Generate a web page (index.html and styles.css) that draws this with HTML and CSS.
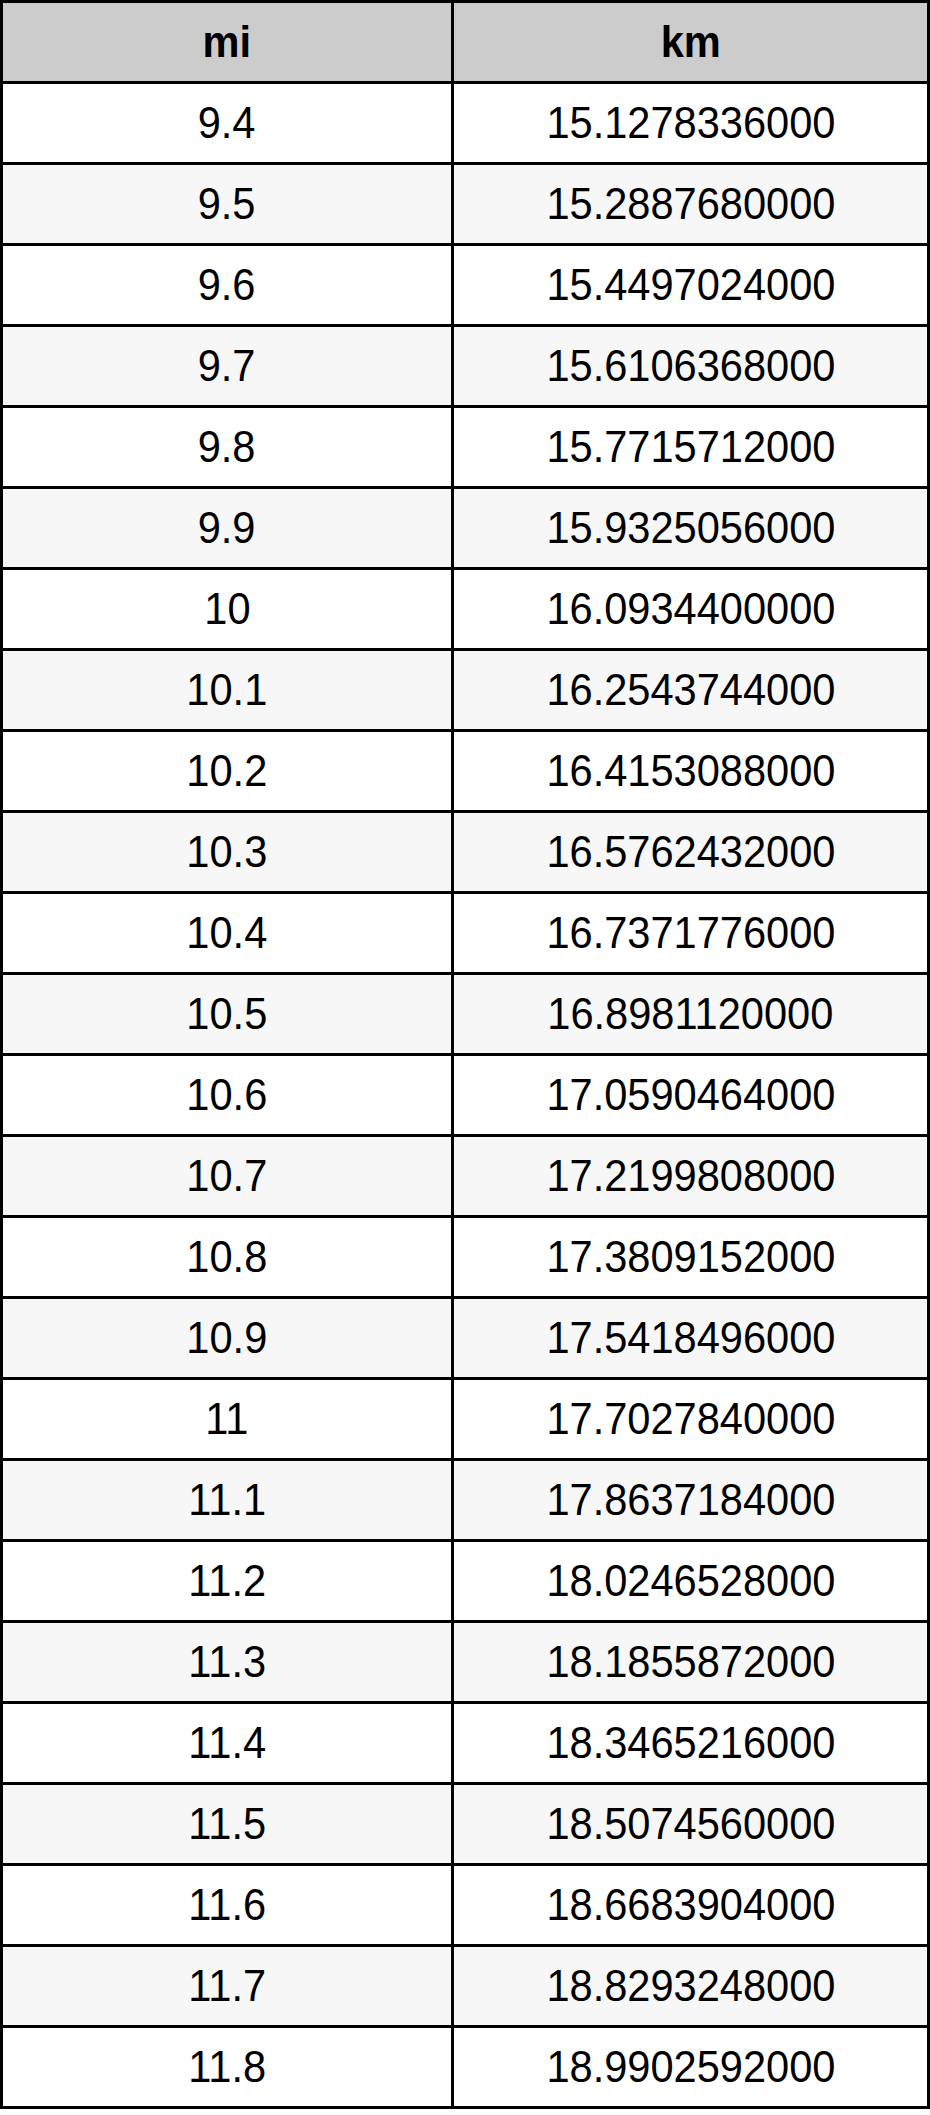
FILE: index.html
```html
<!DOCTYPE html>
<html>
<head>
<meta charset="utf-8">
<title>mi to km</title>
<link rel="stylesheet" href="styles.css">
</head>
<body>
<table class="conv">
<thead>
<tr><th class="c1"><span>mi</span></th><th class="c2"><span>km</span></th></tr>
</thead>
<tbody>
<tr><td><span>9.4</span></td><td><span>15.1278336000</span></td></tr>
<tr><td><span>9.5</span></td><td><span>15.2887680000</span></td></tr>
<tr><td><span>9.6</span></td><td><span>15.4497024000</span></td></tr>
<tr><td><span>9.7</span></td><td><span>15.6106368000</span></td></tr>
<tr><td><span>9.8</span></td><td><span>15.7715712000</span></td></tr>
<tr><td><span>9.9</span></td><td><span>15.9325056000</span></td></tr>
<tr><td><span>10</span></td><td><span>16.0934400000</span></td></tr>
<tr><td><span>10.1</span></td><td><span>16.2543744000</span></td></tr>
<tr><td><span>10.2</span></td><td><span>16.4153088000</span></td></tr>
<tr><td><span>10.3</span></td><td><span>16.5762432000</span></td></tr>
<tr><td><span>10.4</span></td><td><span>16.7371776000</span></td></tr>
<tr><td><span>10.5</span></td><td><span>16.8981120000</span></td></tr>
<tr><td><span>10.6</span></td><td><span>17.0590464000</span></td></tr>
<tr><td><span>10.7</span></td><td><span>17.2199808000</span></td></tr>
<tr><td><span>10.8</span></td><td><span>17.3809152000</span></td></tr>
<tr><td><span>10.9</span></td><td><span>17.5418496000</span></td></tr>
<tr><td><span>11</span></td><td><span>17.7027840000</span></td></tr>
<tr><td><span>11.1</span></td><td><span>17.8637184000</span></td></tr>
<tr><td><span>11.2</span></td><td><span>18.0246528000</span></td></tr>
<tr><td><span>11.3</span></td><td><span>18.1855872000</span></td></tr>
<tr><td><span>11.4</span></td><td><span>18.3465216000</span></td></tr>
<tr><td><span>11.5</span></td><td><span>18.5074560000</span></td></tr>
<tr><td><span>11.6</span></td><td><span>18.6683904000</span></td></tr>
<tr><td><span>11.7</span></td><td><span>18.8293248000</span></td></tr>
<tr><td><span>11.8</span></td><td><span>18.9902592000</span></td></tr>
</tbody>
</table>
</body>
</html>
```
FILE: styles.css
```css
html, body {
  margin: 0;
  padding: 0;
  background: #ffffff;
}

.conv {
  border-collapse: separate;
  border-spacing: 0;
  border-left: 3px solid #000;
  border-top: 3px solid #000;
  font-family: "Liberation Sans", Arial, sans-serif;
  color: #000;
}

.conv th,
.conv td {
  padding: 0;
  height: 78px;
  border-right: 3px solid #000;
  border-bottom: 3px solid #000;
  text-align: center;
  vertical-align: middle;
  font-size: 44px;
  line-height: 50px;
}

.conv th {
  background: #cccccc;
  font-weight: bold;
}

.conv .c1 { width: 448px; }
.conv .c2 { width: 473px; }

.conv tbody tr:nth-child(odd) td { background: #ffffff; }
.conv tbody tr:nth-child(even) td { background: #f7f7f7; }

.conv span {
  display: inline-block;
  transform: scaleX(0.945);
}
```
